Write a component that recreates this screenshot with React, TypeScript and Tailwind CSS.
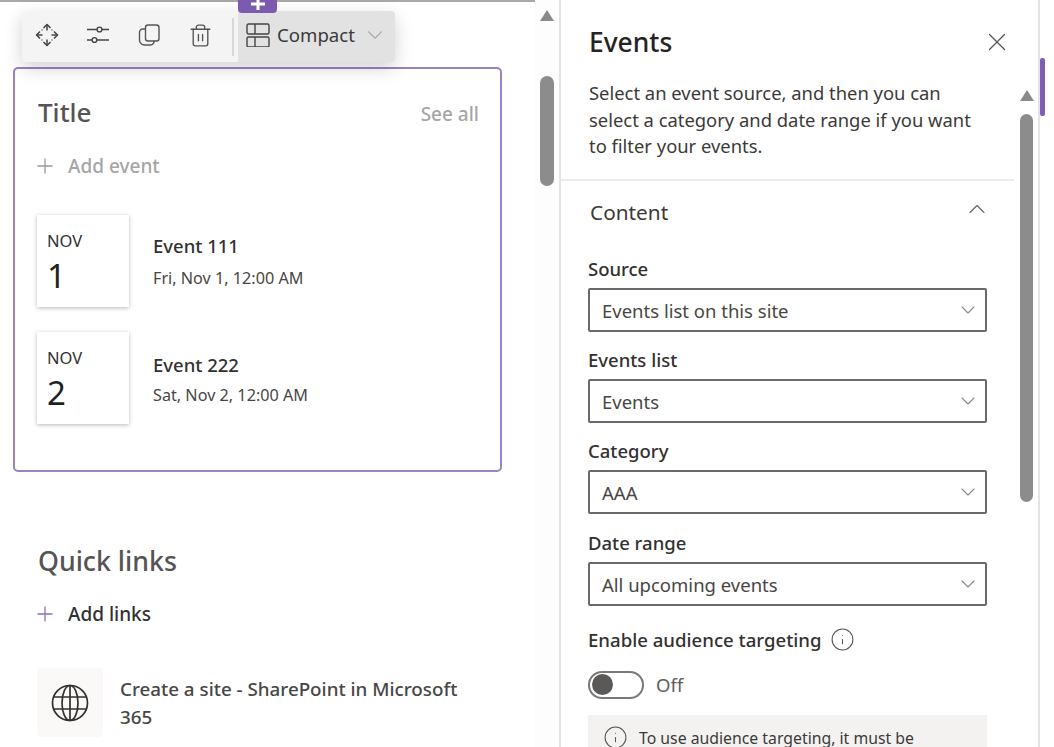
import React from "react";
import { ChevronDown, ChevronUp, Info, Trash2, X } from "lucide-react";

const font = { fontFamily: '"Noto Sans", "Open Sans", sans-serif' };

function MoveGlyph() {
  return (
    <svg width="24" height="24" viewBox="0 0 24 24" fill="none" stroke="#444" strokeWidth="1.5" strokeLinejoin="round">
      <path d="M8.5 5 12 1.5 15.5 5M8.5 19 12 22.5 15.5 19M5 8.5 1.5 12 5 15.5M19 8.5 22.5 12 19 15.5" />
      <path d="M12 1.5v6M12 16.5v6M1.5 12h6M16.5 12h6" />
      <path d="M6.5 7.5l1 -1M16.5 6.5l1 1M6.5 16.5l1 1M16.5 17.5l1 -1" stroke="#888" />
    </svg>
  );
}

function CopyGlyph() {
  return (
    <svg width="24" height="24" viewBox="0 0 24 24" fill="none" stroke="#555" strokeWidth="1.4">
      <rect x="8.5" y="2" width="13.5" height="16" rx="2.5" />
      <path d="M8.5 6H6a3.5 3.5 0 0 0-3.5 3.5V17a5 5 0 0 0 5 5h6a3.5 3.5 0 0 0 3.5-4" />
    </svg>
  );
}

function Sliders() {
  return (
    <svg width="24" height="24" viewBox="0 0 24 24" fill="none" stroke="#444" strokeWidth="1.4">
      <path d="M1 6.5h10M16 6.5h7M1 17h5M11 17h12" />
      <circle cx="13.5" cy="6.5" r="2.4" />
      <circle cx="8.5" cy="17" r="2.4" />
    </svg>
  );
}

function LayoutGlyph() {
  return (
    <svg width="24" height="24" viewBox="0 0 24 24" fill="none" stroke="#444" strokeWidth="1.4">
      <rect x="1" y="1" width="22" height="10" rx="1.5" />
      <rect x="1" y="14" width="22" height="10" rx="1.5" />
      <path d="M9 1v10M9 14v10" />
    </svg>
  );
}

function PlusGlyph({ color }: { color: string }) {
  return (
    <svg width="16" height="16" viewBox="0 0 16 16" fill="none" stroke={color} strokeWidth="1.3" className="shrink-0">
      <path d="M8 0.5v15M0.5 8h15" />
    </svg>
  );
}

function GlobeGlyph() {
  return (
    <svg width="38" height="38" viewBox="0 0 38 38" fill="none" stroke="#323130" strokeWidth="1.7">
      <circle cx="19" cy="19" r="17.5" />
      <ellipse cx="19" cy="19" rx="8" ry="17.5" />
      <path d="M19 1.5v35M3 13h32M3 25h32" />
    </svg>
  );
}

function UpArrow() {
  return <div className="w-0 h-0 border-l-[7px] border-r-[7px] border-b-[11px] border-l-transparent border-r-transparent border-b-[#8a8a8a]" />;
}

function DateCard({ day }: { day: string }) {
  return (
    <div className="w-[92px] h-[92px] bg-white shadow-[0_1px_4px_rgba(0,0,0,0.28)] pl-[10px] pt-[15px] shrink-0">
      <div className="text-[16.5px] leading-[22px] text-[#323130]">NOV</div>
      <div className="mt-[3px] text-[33px] leading-[42px] text-[#201f1e]">{day}</div>
    </div>
  );
}

function EventRow({ day, title, date, gap }: { day: string; title: string; date: string; gap: string }) {
  return (
    <div className="flex items-center gap-[24px]">
      <DateCard day={day} />
      <div className="flex flex-col">
        <div className={`text-[18.5px] leading-[26px] font-medium text-[#323130] ${gap}`}>{title}</div>
        <div className="text-[16.2px] leading-[24px] text-[#484644]">{date}</div>
      </div>
    </div>
  );
}

function Field({ label, value, top }: { label: string; value: string; top: string }) {
  return (
    <div className={top}>
      <div className="text-[18.5px] leading-[26px] font-medium text-[#323130]">{label}</div>
      <div className="mt-[6px] h-[44px] w-[399px] border-2 border-[#6b6a69] rounded-[2px] flex items-center justify-between pl-[12px] pr-[5px]">
        <span className="pt-[2px] text-[18.5px] text-[#484644] leading-[26px]">{value}</span>
        <ChevronDown size={24} strokeWidth={1.1} color="#888" />
      </div>
    </div>
  );
}

export default function App() {
  return (
    <div style={font} className="relative w-[1054px] h-[747px] overflow-hidden bg-white flex">
      {/* Left canvas */}
      <div className="relative w-[535px] h-full shrink-0 border-t-2 border-[#a8a8a8]">
        <div className="absolute left-[22px] top-[9px] w-[373px] h-[51px] rounded-[4px] bg-[#f4f4f4] shadow-[0_6px_18px_rgba(0,0,0,0.18)] flex items-center z-10">
          <div className="w-[210px] flex items-center pl-[13px] pb-[3px] gap-[27px] h-full">
            <MoveGlyph />
            <Sliders />
            <CopyGlyph />
            <Trash2 size={25} strokeWidth={1.3} color="#555" />
          </div>
          <div className="h-[38px] w-[2px] bg-[#d8d8d8]" />
          <div className="flex-1 h-full bg-[#e2e2e2] rounded-r-[4px] ml-[4px] flex items-center pl-[8px] pb-[3px] gap-[7px]">
            <LayoutGlyph />
            <span className="text-[18.6px] text-[#3b3a39]">Compact</span>
            <ChevronDown size={26} strokeWidth={1} color="#aaa" />
          </div>
        </div>
        <div className="absolute left-[238px] -top-[2px] w-[39px] h-[13px] rounded-b-[4px] bg-[#7a5bb0] flex items-start justify-center z-20">
          <svg width="14" height="10" viewBox="0 0 14 10" fill="none" stroke="#fff" strokeWidth="3">
            <path d="M7 0v10M0 4h14" />
          </svg>
        </div>

        <div className="ml-[13px] mt-[65px] w-[489px] h-[405px] border-2 border-[#9a84bd] rounded-[5px] pl-[22px] pr-[21px] pt-[25px]">
          <div className="flex items-center justify-between">
            <div className="ml-[1px] text-[26px] leading-[36px] font-medium text-[#555453]">Title</div>
            <div className="mt-[4px] text-[19px] leading-[26px] font-medium text-[#a6a5a4]">See all</div>
          </div>
          <div className="flex items-center gap-[15px] mt-[23px]">
            <PlusGlyph color="#999" />
            <span className="text-[19px] leading-[26px] font-medium text-[#a6a5a4]">Add event</span>
          </div>
          <div className="mt-[36px] flex flex-col gap-[25px]">
            <EventRow day="1" title="Event 111" date="Fri, Nov 1, 12:00 AM" gap="mb-[7px]" />
            <EventRow day="2" title="Event 222" date="Sat, Nov 2, 12:00 AM" gap="mt-[2px] mb-[5px]" />
          </div>
        </div>

        <div className="ml-[38px] mt-[70px] text-[26.7px] leading-[38px] font-medium text-[#555453]">Quick links</div>
        <div className="ml-[37px] mt-[21px] flex items-center gap-[15px]">
          <PlusGlyph color="#8c70b5" />
          <span className="text-[19px] leading-[26px] font-medium text-[#323130]">Add links</span>
        </div>
        <div className="ml-[37px] mt-[41px] flex items-center gap-[17px]">
          <div className="w-[66px] h-[69px] rounded-[4px] bg-[#faf9f8] flex items-center justify-center shrink-0">
            <GlobeGlyph />
          </div>
          <div className="w-[360px] text-[18.8px] leading-[28px] font-medium text-[#484644]">Create a site - SharePoint in Microsoft 365</div>
        </div>
      </div>

      {/* Left scrollbar */}
      <div className="w-[24px] h-full bg-[#fdfdfd] shrink-0 pl-[5px] pt-[10px] flex flex-col">
        <div><UpArrow /></div>
        <div className="mt-[55px] w-[14px] h-[110px] rounded-[7px] bg-[#8c8c8c]" />
      </div>

      {/* Right panel */}
      <div className="w-[481px] h-full shrink-0 border-x-2 border-[#e4e4e4] flex">
        <div className="w-[456px] shrink-0">
          <div className="pl-[28px] pr-[5px] pt-[23px] flex items-center justify-between">
            <div className="text-[26.4px] leading-[38px] font-medium text-[#252423]">Events</div>
            <X size={30} strokeWidth={1} color="#555" />
          </div>
          <div className="pl-[28px] w-[430px] mt-[19px] text-[18.4px] leading-[26.5px] text-[#3b3a39]">
            Select an event source, and then you can select a category and date range if you want to filter your events.
          </div>
          <div className="mt-[19px] mr-[3px] h-[2px] bg-[#ececec]" />
          <div className="pl-[29px] pr-[26px] mt-[15px] flex items-center justify-between">
            <span className="text-[20.8px] leading-[32px] text-[#3b3a39]">Content</span>
            <ChevronUp size={28} strokeWidth={1} color="#666" className="-mt-[6px]" />
          </div>
          <div className="pl-[27px]">
            <Field label="Source" value="Events list on this site" top="mt-[28px]" />
            <Field label="Events list" value="Events" top="mt-[15px]" />
            <Field label="Category" value="AAA" top="mt-[15px]" />
            <Field label="Date range" value="All upcoming events" top="mt-[16px]" />
            <div className="mt-[21px] flex items-center gap-[9px]">
              <span className="text-[18.6px] leading-[26px] font-medium text-[#323130]">Enable audience targeting</span>
              <Info size={25} strokeWidth={1} color="#555" />
            </div>
            <div className="mt-[18px] flex items-center gap-[12px]">
              <div className="w-[56px] h-[28px] rounded-full border-2 border-[#7a7978] flex items-center pl-[2px]">
                <div className="w-[21px] h-[21px] rounded-full bg-[#5a5958]" />
              </div>
              <span className="text-[18.5px] text-[#605e5c]">Off</span>
            </div>
            <div className="mt-[16px] w-[399px] h-[60px] bg-[#f3f2f1] flex items-start pl-[15px] pt-[10px] gap-[11px]">
              <Info size={25} strokeWidth={1} color="#555" className="shrink-0" />
              <span className="pt-[1px] text-[15.8px] leading-[24px] text-[#3b3a39]">To use audience targeting, it must be</span>
            </div>
          </div>
        </div>
        <div className="flex-1 pt-[90px] flex flex-col items-start pl-[3px]">
          <UpArrow />
          <div className="mt-[13px] w-[13px] h-[388px] rounded-[7px] bg-[#8c8c8c]" />
        </div>
      </div>

      {/* Outer scroll indicator */}
      <div className="w-[5px] h-[58px] mt-[58px] bg-[#7d5fb8] rounded-[2px]" />
    </div>
  );
}
